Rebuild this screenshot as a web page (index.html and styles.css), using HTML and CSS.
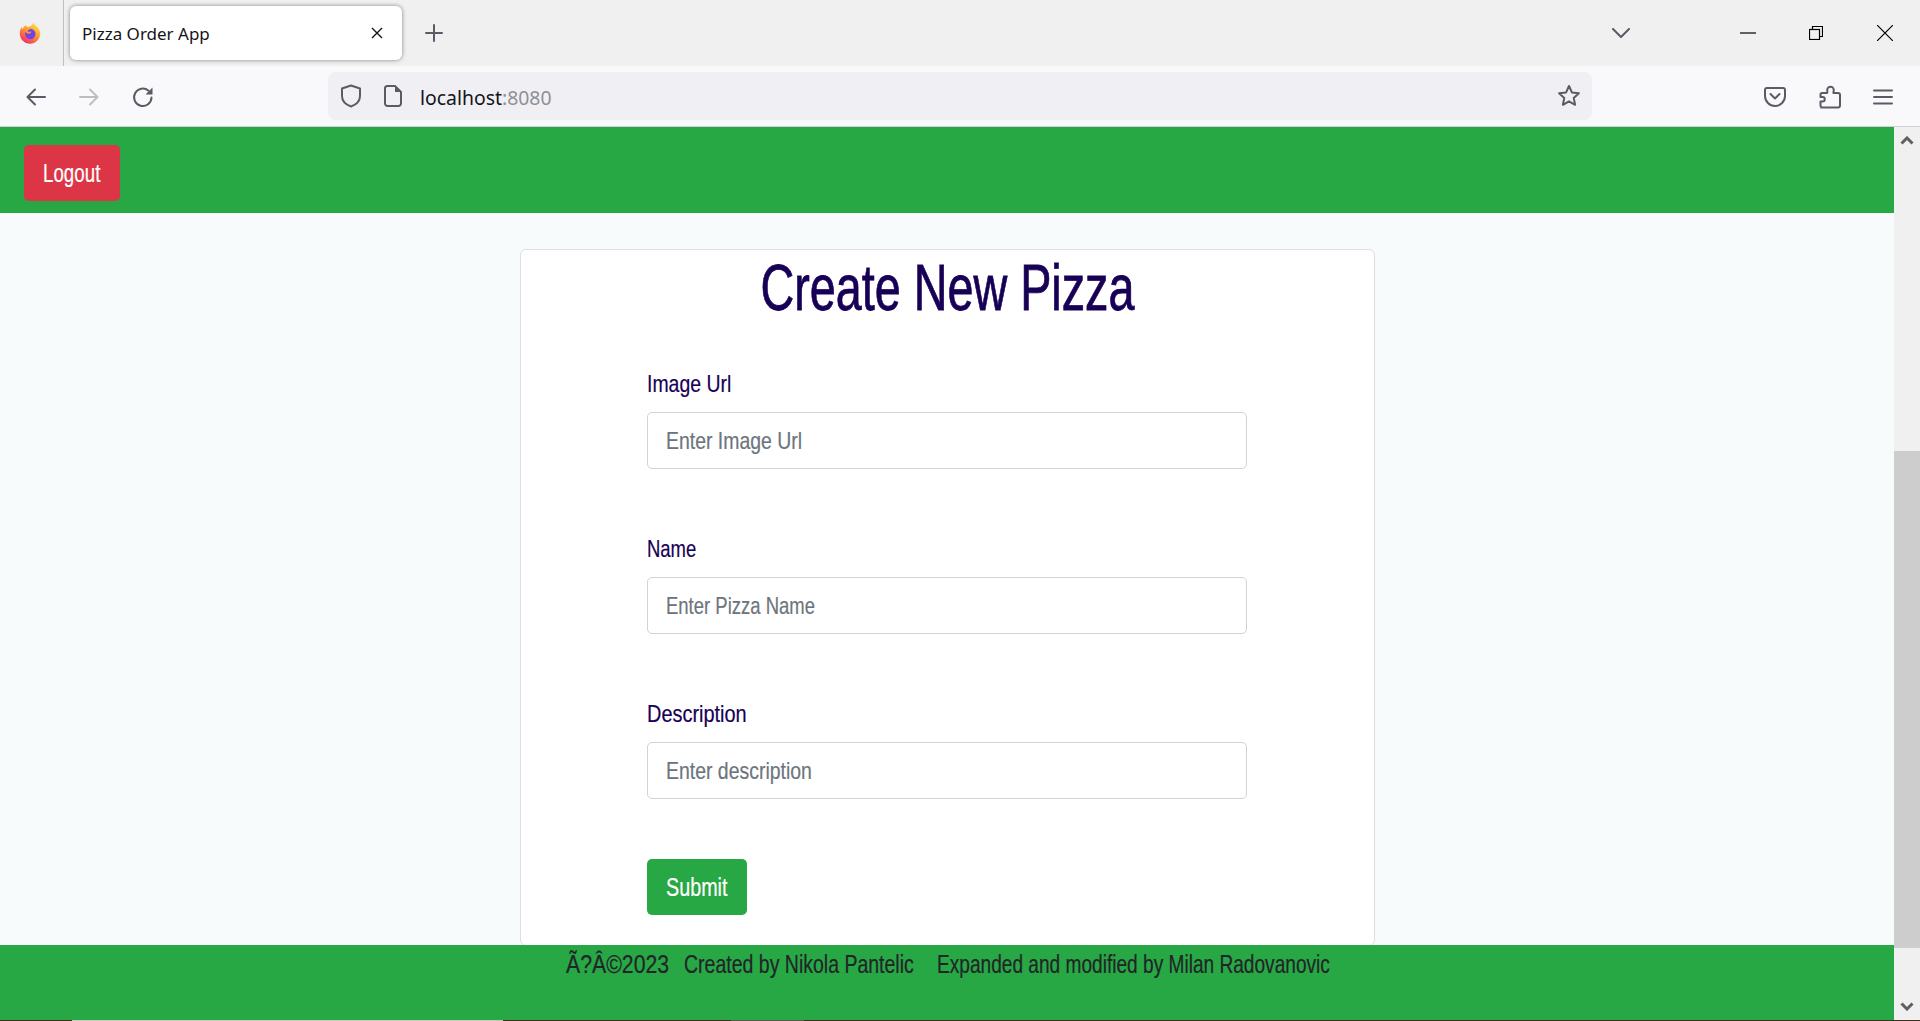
FILE: index.html
```html
<!DOCTYPE html>
<html lang="en">

<head>
    <meta charset="UTF-8">
    <title>Pizza Order App</title>
    <link rel="stylesheet" href="styles.css">
</head>

<body>
    <div class="tabbar">
        <div class="logo-box">
            <svg class="fx-logo" width="24" height="24" viewBox="0 0 24 24">
                <defs>
                    <linearGradient id="fxOuter" x1="0.8" y1="0" x2="0.2" y2="1">
                        <stop offset="0" stop-color="#ffe84b" />
                        <stop offset="0.45" stop-color="#ff9a2e" />
                        <stop offset="1" stop-color="#f0246e" />
                    </linearGradient>
                </defs>
                <path d="M15.5 1.5c.6 2 2.2 2.8 3.6 4.3 2 2.1 3.1 4.3 3.1 6.7 0 5.7-4.5 10.2-10.2 10.2S1.8 18.200 1.800 12.500c0-2.400.7-4.800 2-6.500.1 1 .5 1.700 1 2.200.3-1.900 1.500-3.200 3.200-4 .2 1 .9 1.500 1.900 1.800 2.200-.6 4.800-1.800 5.600-4.500z" fill="url(#fxOuter)" />
                <circle cx="12.300" cy="13" r="5.200" fill="#7542e5" />
                <path d="M7.200 9.200c1.500-1.200 4-1.500 5.700-.6-1.800 0-3 .8-3.300 1.800 1 .6 2.800.5 3.900.1-.2 1.400-1.300 2.200-2.800 2.200-1.800 0-3.400-1.500-3.500-3.500z" fill="#ff9a2e" />
            </svg>
        </div>
        <div class="tab">
            <span class="tab-title">Pizza Order App</span>
            <svg width="12" height="12" viewBox="0 0 12 12" class="stroke-dark">
                <path d="M1 1l10 10M11 1L1 11" />
            </svg>
        </div>
        <svg class="new-tab stroke-grey" width="18" height="18" viewBox="0 0 18 18">
            <path d="M9 1v16M1 9h16" />
        </svg>
        <div class="spacer"></div>
        <svg class="tab-list stroke-grey" width="18" height="10" viewBox="0 0 18 10">
            <path d="M1 1l8 8 8-8" />
        </svg>
        <div class="win-btn">
            <svg width="16" height="2" viewBox="0 0 16 2" class="stroke-black"><path d="M0 1h16" /></svg>
        </div>
        <div class="win-btn">
            <svg width="14" height="14" viewBox="0 0 14 14" class="stroke-black">
                <rect x="0.500" y="3.500" width="10" height="10" />
                <path d="M3.500 3.500V.5h10v10h-3" />
            </svg>
        </div>
        <div class="win-btn win-close">
            <svg width="16" height="16" viewBox="0 0 16 16" class="stroke-black"><path d="M0 0l16 16M16 0L0 16" /></svg>
        </div>
    </div>

    <div class="toolbar">
        <svg class="nav-icon stroke-grey" width="20" height="18" viewBox="0 0 20 18"><path d="M19 9H2M9 1.500L1.500 9 9 16.500" /></svg>
        <svg class="nav-icon stroke-faint" width="20" height="18" viewBox="0 0 20 18"><path d="M1 9h17M11 1.500L18.500 9 11 16.500" /></svg>
        <svg class="nav-icon stroke-grey" width="22" height="22" viewBox="0 0 22 22">
            <path d="M19.500 11.500a8.700 8.700 0 1 1-3-6.800" />
            <path class="fill-grey" d="M20.500 1.500v7h-7z" />
        </svg>
        <div class="urlbar">
            <svg class="stroke-grey" width="22" height="24" viewBox="0 0 22 24">
                <path d="M11 1.500l9 3v7.500c0 5-3.500 8.500-9 10.500-5.500-2-9-5.500-9-10.500V4.500z" />
            </svg>
            <svg class="doc-icon stroke-grey" width="18" height="22" viewBox="0 0 18 22">
                <path d="M3 1h8l6 6v11.500a2.500 2.500 0 0 1-2.500 2.500h-11A2.500 2.500 0 0 1 1 18.500v-15A2.500 2.500 0 0 1 3 1z" />
                <path class="fill-grey" d="M11 1l6 6h-6z" />
            </svg>
            <span class="url-text">localhost<span class="url-port">:8080</span></span>
            <div class="spacer"></div>
            <svg class="stroke-grey" width="24" height="24" viewBox="0 0 24 24">
                <path d="M12 2l2.900 6.400 7 .8-5.200 4.700 1.400 6.900L12 17.300l-6.100 3.500 1.400-6.900L2.100 9.200l7-.8z" />
            </svg>
        </div>
        <div class="spacer"></div>
        <svg class="tool-icon stroke-grey" width="22" height="20" viewBox="0 0 22 20">
            <path d="M3 1h16a2 2 0 0 1 2 2v6a10 10 0 0 1-20 0V3a2 2 0 0 1 2-2z" />
            <path d="M6.500 7l4.500 4.500L15.500 7" />
        </svg>
        <svg class="tool-icon stroke-grey" width="22" height="24" viewBox="0 0 22 24">
            <path d="M2 22.500h17a2 2 0 0 0 2-2V10a2 2 0 0 0-2-2h-4.500c-.5-1 .3-1.500.3-3a3.300 3.300 0 0 0-6.600 0c0 1.500.8 2-.3 3H3a1.500 1.500 0 0 0-1.500 1.500v2.500h2c3 0 3 4.500 0 4.500h-2v4c0 .7.200 1 .5 1z" />
        </svg>
        <svg class="tool-icon menu-icon stroke-grey" width="20" height="16" viewBox="0 0 20 16">
            <path d="M1 1.500h18M1 8h18M1 14.500h18" />
        </svg>
    </div>

    <div class="viewport">
        <div class="page">
            <nav class="navbar">
                <button type="button" class="btn btn-logout"><span class="narrow">Logout</span></button>
            </nav>

            <main class="content">
                <div class="card">
                    <h1 class="card-title">Create New Pizza</h1>
                    <form class="pizza-form">
                        <div class="form-group">
                            <label for="imageUrl"><span class="narrow">Image Url</span></label>
                            <div class="field"><span class="placeholder narrow">Enter Image Url</span></div>
                        </div>
                        <div class="form-group">
                            <label for="name"><span class="narrow tighter">Name</span></label>
                            <div class="field"><span class="placeholder narrow tighter">Enter Pizza Name</span></div>
                        </div>
                        <div class="form-group">
                            <label for="description"><span class="narrow wider">Description</span></label>
                            <div class="field"><span class="placeholder narrow">Enter description</span></div>
                        </div>
                        <button type="button" class="btn btn-submit"><span class="narrow">Submit</span></button>
                    </form>
                </div>
            </main>

            <footer class="footer">
                <span class="foot-year">Ã?Â©2023</span>
                <span class="foot-credit">Created by Nikola Pantelic</span>
                <span class="foot-wide">Expanded and modified by Milan Radovanovic</span>
            </footer>
        </div>

        <div class="scrollbar">
            <svg class="scroll-arrow" width="14" height="9" viewBox="0 0 14 9"><path d="M1.500 7.500L7 2l5.500 5.500" /></svg>
            <div class="scroll-track"><div class="scroll-thumb"></div></div>
            <svg class="scroll-arrow" width="14" height="9" viewBox="0 0 14 9"><path d="M1.500 1.500L7 7l5.500-5.500" /></svg>
        </div>
    </div>

    <div class="taskbar-edge">
        <div class="edge-light"></div>
        <div class="edge-dark"></div>
        <div class="edge-grey"></div>
    </div>
</body>

</html>
```

FILE: styles.css
```css
* {
    box-sizing: border-box;
}

html,
body {
    margin: 0;
    height: 1021px;
    overflow: hidden;
}

body {
    font-family: "Liberation Sans", sans-serif;
    background: #f7fbfc;
    display: flex;
    flex-direction: column;
}

svg {
    flex: none;
    display: block;
    fill: none;
}

.spacer {
    flex: 1;
}

.narrow {
    display: inline-block;
    white-space: nowrap;
    transform: scaleX(0.81);
    transform-origin: left center;
    -webkit-text-stroke: 0.2px;
}

.narrow.tighter {
    transform: scaleX(0.77);
}

.narrow.wider {
    transform: scaleX(0.83);
}

.stroke-dark {
    stroke: #15141a;
    stroke-width: 1.4;
}

.stroke-black {
    stroke: #000;
    stroke-width: 1.2;
}

.stroke-grey {
    stroke: #5b5b66;
    stroke-width: 2;
    stroke-linejoin: round;
    stroke-linecap: round;
}

.stroke-faint {
    stroke: #bdbdc3;
    stroke-width: 2;
    stroke-linejoin: round;
    stroke-linecap: round;
}

.fill-grey {
    fill: #5b5b66;
    stroke: none;
}

/* browser chrome */
.tabbar {
    height: 66px;
    background: #f0f0f0;
    display: flex;
    align-items: center;
}

.logo-box {
    width: 64px;
    height: 66px;
    border-right: 1px solid #bfbfbf;
    display: flex;
    align-items: center;
    justify-content: center;
    padding-right: 4px;
}

.tab {
    width: 332px;
    height: 54px;
    margin-left: 6px;
    background: white;
    border-radius: 6px;
    box-shadow: 0 0 4px rgba(0, 0, 0, 0.45);
    display: flex;
    align-items: center;
    justify-content: space-between;
    padding: 0 19px 0 12px;
}

.tab-title {
    font-family: "Noto Sans", sans-serif;
    font-size: 17px;
    color: #15141a;
}

.new-tab {
    margin-left: 23px;
}

.tab-list {
    margin-right: 84px;
}

.win-btn {
    width: 68px;
    display: flex;
    justify-content: center;
}

.win-close {
    width: 70px;
}

.toolbar {
    height: 61px;
    background: #f9f9fb;
    border-bottom: 1px solid #cfcfd8;
    display: flex;
    align-items: center;
    padding: 0 27px 0 26px;
}

.nav-icon {
    margin-right: 33px;
    margin-top: 2px;
}

.urlbar {
    width: 1264px;
    height: 48px;
    margin-left: 141px;
    background: #f0f0f4;
    border-radius: 8px;
    display: flex;
    align-items: center;
    padding: 0 11px 0 12px;
}

.doc-icon {
    margin-left: 22px;
}

.url-text {
    font-family: "Noto Sans", sans-serif;
    font-size: 19.4px;
    color: #15141a;
    margin-left: 18px;
    padding-top: 2px;
}

.url-port {
    color: #8f8f96;
}

.tool-icon {
    margin-left: 33px;
    margin-top: 2px;
}

.menu-icon {
    margin-left: 32px;
}

/* page */
.viewport {
    height: 893px;
    display: flex;
}

.page {
    flex: 1;
    display: flex;
    flex-direction: column;
    overflow: hidden;
}

.navbar {
    height: 86px;
    flex: none;
    background: #28a745;
    display: flex;
    align-items: center;
    padding: 6px 24px 0;
}

.btn {
    font-family: inherit;
    font-size: 25px;
    color: white;
    border: none;
    border-radius: 5px;
    height: 56px;
    padding: 0 19px;
    text-align: left;
}

.btn-logout {
    background: #dc3545;
    width: 96px;
}

.btn-logout .narrow {
    transform: scaleX(0.75);
}

.content {
    flex: 1;
    min-height: 0;
    padding-top: 36px;
    display: flex;
    justify-content: center;
}

.card {
    width: 855px;
    height: 697px;
    background: white;
    border: 1px solid #dfdfdf;
    border-radius: 6px;
    flex: none;
}

.card-title {
    margin: 0;
    font-size: 64px;
    line-height: 76px;
    font-weight: normal;
    text-align: center;
    color: #170055;
    transform: scaleX(0.73);
    -webkit-text-stroke: 0.8px;
}

.pizza-form {
    padding: 43px 126px 0;
}

.form-group {
    height: 165px;
}

.form-group label {
    display: block;
    font-size: 24px;
    line-height: 30px;
    color: #170055;
    margin-bottom: 13px;
}

.field {
    width: 600px;
    height: 57px;
    border: 1px solid #ced4da;
    border-radius: 5px;
    background: white;
    display: flex;
    align-items: center;
    padding-left: 18px;
}

.placeholder {
    font-size: 24px;
    color: #6c757d;
}

.btn-submit {
    background: #28a745;
    width: 100px;
    display: block;
    margin-top: -5px;
}

.btn-submit .narrow {
    transform: scaleX(0.79);
}

.footer {
    height: 75px;
    flex: none;
    background: #28a745;
    color: #212529;
    font-size: 25px;
    line-height: 38px;
    display: flex;
    justify-content: center;
    -webkit-text-stroke: 0.2px;
}

.footer span {
    display: block;
    white-space: nowrap;
    transform-origin: left center;
}

.foot-year {
    width: 102px;
    transform: scaleX(0.85);
}

.foot-credit {
    width: 231px;
    margin-left: 16px;
    transform: scaleX(0.78);
}

.foot-wide {
    width: 391px;
    margin-left: 22px;
    transform: scaleX(0.764);
}

.scrollbar {
    width: 26px;
    background: #f0f0f0;
    display: flex;
    flex-direction: column;
    align-items: center;
}

.scroll-arrow {
    margin: 9px 0;
    stroke: #606060;
    stroke-width: 3;
}

.scroll-track {
    flex: 1;
    width: 100%;
    padding-top: 297px;
    padding-bottom: 45px;
}

.scroll-thumb {
    height: 100%;
    background: #cdcdcd;
}

.taskbar-edge {
    height: 1px;
    background: #3a2f20;
    display: flex;
}

.edge-light {
    width: 431px;
    margin-left: 72px;
    background: #c8c8c0;
}

.edge-dark {
    width: 228px;
}

.edge-grey {
    width: 73px;
    background: #5a5a50;
}
```
